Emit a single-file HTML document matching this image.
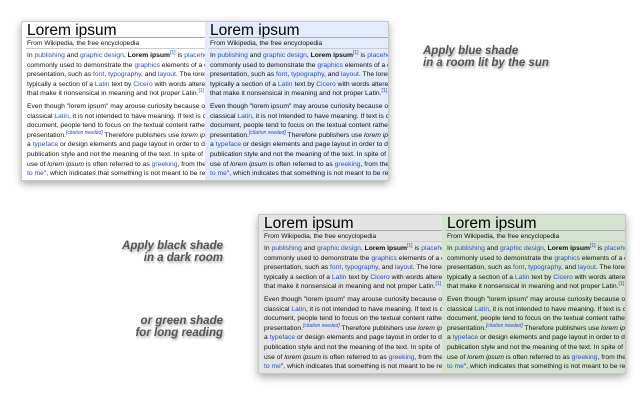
<!DOCTYPE html>
<html><head><meta charset="utf-8"><style>
html,body{margin:0;padding:0;background:#fff;width:643px;height:402px;overflow:hidden;font-family:"Liberation Sans",Arial,sans-serif}
.panel{position:absolute;width:366px;height:158px;border:1px solid #c8c8c8;box-shadow:0 3px 8px rgba(0,0,0,.35);overflow:hidden}
.col{position:absolute;top:0;width:183px;height:100%;overflow:hidden;color:#111}
.col .t{position:absolute;left:5px;top:0px;font-size:15.5px;line-height:18px;color:#000}
.col .l1{position:absolute;left:4px;right:0;top:15px;border-top:1px solid #aaa}
.col .s{position:absolute;left:5px;top:17px;font-size:6.6px;line-height:9px}
.col .l2{position:absolute;left:4px;right:0;top:26px;border-top:1px solid #ccc}
.col .b{position:absolute;left:5px;top:29px;font-size:6.75px;line-height:9.6px;white-space:nowrap}
.b p{margin:0 0 3px 0}
a{color:#2a4fb8;text-decoration:none}
sup{font-size:5px;line-height:0;color:#2a4fb8}
.cap{position:absolute;font-style:italic;font-weight:bold;font-size:11.5px;line-height:12px;color:#555;text-shadow:1px 2px 2px rgba(0,0,0,.35)}
</style></head><body>

<div class="panel" style="left:21px;top:21px">
 <div class="col" style="left:0;background:#fff">
  <div class="t">Lorem ipsum</div><div class="l1"></div>
  <div class="s">From Wikipedia, the free encyclopedia</div><div class="l2"></div>
  <div class="b"><p>In <a>publishing</a> and <a>graphic design</a>, <b>Lorem ipsum</b><sup>[1]</sup> is <a>placeholder</a><br>commonly used to demonstrate the <a>graphics</a> elements of a doc<br>presentation, such as <a>font</a>, <a>typography</a>, and <a>layout</a>. The lorem<br>typically a section of a <a>Latin</a> text by <a>Cicero</a> with words altered<br>that make it nonsensical in meaning and not proper Latin.<sup>[1]</sup></p>
  <p>Even though "lorem ipsum" may arouse curiosity because of it<br>classical <a>Latin</a>, it is not intended to have meaning. If text is con<br>document, people tend to focus on the textual content rather th<br>presentation.<sup><i>[citation needed]</i></sup> Therefore publishers use <i>lorem ipsum</i><br>a <a>typeface</a> or design elements and page layout in order to direct<br>publication style and not the meaning of the text. In spite of its<br>use of <i>lorem ipsum</i> is often referred to as <a>greeking</a>, from the ph<br><a>to me</a>", which indicates that something is not meant to be read</p></div>
 </div>
 <div class="col" style="left:183px;background:#e3ebfa">
  <div class="t">Lorem ipsum</div><div class="l1"></div>
  <div class="s">From Wikipedia, the free encyclopedia</div><div class="l2"></div>
  <div class="b"><p>In <a>publishing</a> and <a>graphic design</a>, <b>Lorem ipsum</b><sup>[1]</sup> is <a>placeholder</a><br>commonly used to demonstrate the <a>graphics</a> elements of a doc<br>presentation, such as <a>font</a>, <a>typography</a>, and <a>layout</a>. The lorem<br>typically a section of a <a>Latin</a> text by <a>Cicero</a> with words altered<br>that make it nonsensical in meaning and not proper Latin.<sup>[1]</sup></p>
  <p>Even though "lorem ipsum" may arouse curiosity because of it<br>classical <a>Latin</a>, it is not intended to have meaning. If text is con<br>document, people tend to focus on the textual content rather th<br>presentation.<sup><i>[citation needed]</i></sup> Therefore publishers use <i>lorem ipsum</i><br>a <a>typeface</a> or design elements and page layout in order to direct<br>publication style and not the meaning of the text. In spite of its<br>use of <i>lorem ipsum</i> is often referred to as <a>greeking</a>, from the ph<br><a>to me</a>", which indicates that something is not meant to be read</p></div>
 </div>
</div>

<div class="panel" style="left:258px;top:214px">
 <div class="col" style="left:0;background:#e4e4e4">
  <div class="t">Lorem ipsum</div><div class="l1"></div>
  <div class="s">From Wikipedia, the free encyclopedia</div><div class="l2"></div>
  <div class="b"><p>In <a>publishing</a> and <a>graphic design</a>, <b>Lorem ipsum</b><sup>[1]</sup> is <a>placeholder</a><br>commonly used to demonstrate the <a>graphics</a> elements of a doc<br>presentation, such as <a>font</a>, <a>typography</a>, and <a>layout</a>. The lorem<br>typically a section of a <a>Latin</a> text by <a>Cicero</a> with words altered<br>that make it nonsensical in meaning and not proper Latin.<sup>[1]</sup></p>
  <p>Even though "lorem ipsum" may arouse curiosity because of it<br>classical <a>Latin</a>, it is not intended to have meaning. If text is con<br>document, people tend to focus on the textual content rather th<br>presentation.<sup><i>[citation needed]</i></sup> Therefore publishers use <i>lorem ipsum</i><br>a <a>typeface</a> or design elements and page layout in order to direct<br>publication style and not the meaning of the text. In spite of its<br>use of <i>lorem ipsum</i> is often referred to as <a>greeking</a>, from the ph<br><a>to me</a>", which indicates that something is not meant to be read</p></div>
 </div>
 <div class="col" style="left:183px;background:#d4e3cf">
  <div class="t">Lorem ipsum</div><div class="l1"></div>
  <div class="s">From Wikipedia, the free encyclopedia</div><div class="l2"></div>
  <div class="b"><p>In <a>publishing</a> and <a>graphic design</a>, <b>Lorem ipsum</b><sup>[1]</sup> is <a>placeholder</a><br>commonly used to demonstrate the <a>graphics</a> elements of a doc<br>presentation, such as <a>font</a>, <a>typography</a>, and <a>layout</a>. The lorem<br>typically a section of a <a>Latin</a> text by <a>Cicero</a> with words altered<br>that make it nonsensical in meaning and not proper Latin.<sup>[1]</sup></p>
  <p>Even though "lorem ipsum" may arouse curiosity because of it<br>classical <a>Latin</a>, it is not intended to have meaning. If text is con<br>document, people tend to focus on the textual content rather th<br>presentation.<sup><i>[citation needed]</i></sup> Therefore publishers use <i>lorem ipsum</i><br>a <a>typeface</a> or design elements and page layout in order to direct<br>publication style and not the meaning of the text. In spite of its<br>use of <i>lorem ipsum</i> is often referred to as <a>greeking</a>, from the ph<br><a>to me</a>", which indicates that something is not meant to be read</p></div>
 </div>
</div>

<div class="cap" style="left:423px;top:45px">Apply blue shade<br>in a room lit by the sun</div>
<div class="cap" style="left:100px;top:240px;width:123px;text-align:right">Apply black shade<br>in a dark room</div>
<div class="cap" style="left:100px;top:315px;width:123px;text-align:right">or green shade<br>for long reading</div>
</body></html>
